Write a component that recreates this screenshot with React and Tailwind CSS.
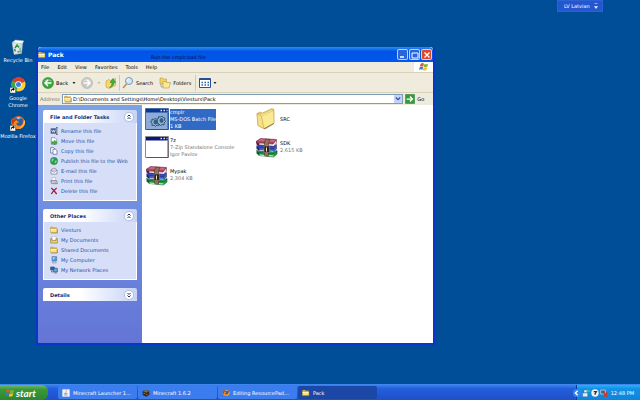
import React, { useState } from 'react';

function Svg({ size = 'size-3', box = 24, children }) {
  return (
    <svg className={`${size} shrink-0`} viewBox={`0 0 ${box} ${box}`} aria-hidden="true">
      {children}
    </svg>
  );
}

function FolderIcon({ size }) {
  return (
    <Svg size={size}>
      <path d="M1 5l2-2h6l2 2h9v4H1z" fill="#e3b548" stroke="#a8842c" />
      <path d="M1 8h20v12H1z" fill="#fbe27e" stroke="#a8842c" />
      <path d="M2 9h18v3H2z" fill="#fff6bd" />
      <path d="M22 9v12H3" fill="none" stroke="#6e5a2a" strokeWidth="1.5" />
    </Svg>
  );
}

function BigFolderIcon() {
  return (
    <Svg size="size-6" box={48}>
      <path d="M4 13l6-3 5 2 19-9 4 2v27L17 43 6 37z" fill="#eccb62" stroke="#b5933a" />
      <path d="M10 15l7-2 18-8 2 25-20 11z" fill="#fdf3a8" stroke="#d5b858" />
      <path d="M4 13l9 5 5 25-12-6z" fill="#f8e183" stroke="#c09c3c" />
      <path d="M13 18l24-11 1 25-20 11z" fill="#fbea94" stroke="#c9aa4a" />
      <path d="M18 43l20-11v2L19 45z" fill="#8a7a4a" />
    </Svg>
  );
}

function WinrarIcon() {
  return (
    <Svg size="size-6" box={48}>
      <path d="M2 13l9-6 32 2-7 9-28-3z" fill="#b8405f" stroke="#4a1428" />
      <path d="M11 8l29 2-3 4-30-2z" fill="#cf6480" />
      <path d="M2 13l6 3v6l-5-3z" fill="#6b1635" />
      <path d="M8 16l28 2 7-8v6l-6 7-29-2z" fill="#f0e4e8" stroke="#5c2038" />
      <path d="M3 22l6-2 28 3 6-4v3l-6 6-29-3z" fill="#2f48c8" stroke="#141c58" />
      <path d="M3 22l5 3v6l-5-3z" fill="#182778" />
      <path d="M8 25l29 3 6-5v5l-6 6-29-2z" fill="#4560d8" stroke="#141c58" />
      <path d="M9 30l28 2v2L9 32z" fill="#f0f2ff" />
      <path d="M3 31l6 1 28 2 7-3v3l-7 5-29-3z" fill="#2fae5a" stroke="#0a4020" />
      <path d="M3 31l5 4v6l-5-4z" fill="#11602c" />
      <path d="M8 35l29 2 7-4v5l-7 6-29-3z" fill="#1c9a44" stroke="#0a4020" />
      <path d="M9 39l28 2v2L9 41z" fill="#e2f6e4" />
      <path d="M21 8l9 1-3 8v25l-8-1V16z" fill="#93705a" stroke="#40281a" />
      <path d="M18 22h11v13H18z" fill="#2c2428" stroke="#a58e78" />
      <path d="M23 25v8" stroke="#f1e2b4" strokeWidth="2" />
    </Svg>
  );
}

function ConsoleIcon({ gear }) {
  return (
    <Svg size="size-6" box={48}>
      <path d="M1 3h46v42H1z" fill={gear ? '#8eaad8' : '#ffffff'} stroke={gear ? '#4a6ba8' : '#8b8b90'} strokeWidth="2" />
      <path d="M2 4h44v7H2z" fill={gear ? '#07388f' : '#0b1580'} />
      <path d="M31 7h3m3 0h3m3 0h2" stroke="#d6e2ff" strokeWidth="3" />
      <path d="M46 12v33H3" fill="none" stroke={gear ? '#2a4f8d' : '#55555c'} strokeWidth="2" />
      {gear && (
        <g fill="#8fb4cc" stroke="#2c587f" strokeWidth="2">
          <path d="M11 29l3-1v-4l4 1 3-3 3 3 4-1v4l3 2-3 3v4l-4-1-3 3-3-3-4 1v-4z" />
          <path d="M24 24l3-1v-4l4 1 3-2 2 3 4 1-1 4 2 3-3 3v4l-4-1-3 2-3-3-3-1v-4z" />
          <ellipse cx="21" cy="30" rx="3" ry="4" fill="#33608a" />
          <ellipse cx="33" cy="27" rx="3" ry="4" fill="#33608a" />
        </g>
      )}
    </Svg>
  );
}

function FirefoxIcon({ size }) {
  return (
    <Svg size={size} box={32}>
      <circle cx="17" cy="15" r="13" fill="#e8641b" />
      <circle cx="17" cy="13" r="9" fill="#2c5da8" />
      <path d="M12 6c3-3 9-3 12 1-3-1-5 0-6 2z" fill="#9cc8ee" />
      <path d="M4 6c-4 10 0 20 11 22 9 1 15-6 15-14-2 5-6 8-11 8-4 0-7-3-6-6 1 0 4 0 5-2-2-1-4-2-5-4-2-1-4-1-5 0-1-1-3-2-4-4z" fill="#f08a24" />
      <path d="M4 6c-2 6-1 12 3 15-1-5 1-8 6-11-2-1-4-1-5 0-1-1-3-2-4-4z" fill="#c03a12" />
      <path d="M30 10c1 9-4 16-12 17 5-3 9-8 9-14z" fill="#fbc63a" />
    </Svg>
  );
}

function ShortcutArrow() {
  return (
    <g>
      <path d="M0 21h11v11H0z" fill="#ffffff" stroke="#555555" />
      <path d="M3 30c0-3 1-4 3-4v2l4-4-4-3v2c-4 0-5 4-3 7z" fill="#111111" />
    </g>
  );
}

function RecycleIcon() {
  return (
    <Svg size="size-4" box={32}>
      <path d="M4 7l22-3-3 25-15 2z" fill="#dfe8ea" stroke="#93a7ae" />
      <path d="M4 7l7-5 17 2-4 5z" fill="#ffffff" stroke="#9fb2b8" />
      <path d="M10 18l4-6 4 5m2 1l1 7-6 1m-4-1l-2-5" fill="none" stroke="#2f9a3c" strokeWidth="3" />
      <path d="M24 8l-2 20-5 1 2-20z" fill="#b5c6cc" opacity=".6" />
    </Svg>
  );
}

function ChromeIcon() {
  return (
    <Svg size="size-4" box={32}>
      <circle cx="17" cy="15" r="14" fill="#fcd13a" />
      <path d="M17 15L4.500 8.500A14 14 0 0 1 30 9z" fill="#dc3c2c" />
      <path d="M17 15l-4 13.500A14 14 0 0 1 4.500 8.500z" fill="#3aa84a" />
      <circle cx="17" cy="15" r="6.500" fill="#ffffff" />
      <circle cx="17" cy="15" r="5" fill="#3d7fd8" />
      <ShortcutArrow />
    </Svg>
  );
}

function DesktopFirefox() {
  return (
    <span className="relative flex">
      <FirefoxIcon size="size-4" />
      <svg className="absolute inset-0 size-4" viewBox="0 0 32 32" aria-hidden="true"><ShortcutArrow /></svg>
    </span>
  );
}

function NavIcon({ forward }) {
  return (
    <Svg>
      <circle cx="12" cy="12" r="11" fill={forward ? '#c9c9c4' : '#3aa63a'} stroke={forward ? '#a9a9a4' : '#1f7a25'} />
      <path d="M4 9c2-6 13-7 16 0-5-2-11-2-16 0z" fill="#ffffff" opacity=".35" />
      <path d={forward ? 'M5 12h13m-6-6l6 6-6 6' : 'M19 12H6m6-6l-6 6 6 6'} fill="none" stroke="#ffffff" strokeWidth="3" />
    </Svg>
  );
}

function UpIcon() {
  return (
    <Svg>
      <path d="M2 8l6-3 3 2 10-4v14L8 23l-6-3z" fill="#f5d96b" stroke="#b08c32" />
      <path d="M9 21c4-2 5-6 5-10h-4l6-8 5 8h-3c0 4-3 9-9 10z" fill="#42b048" stroke="#1f7a25" />
    </Svg>
  );
}

function SearchIcon() {
  return (
    <Svg>
      <path d="M9 14l-7 8" stroke="#b88d55" strokeWidth="3" />
      <circle cx="14" cy="8" r="7" fill="#cfe9fa" stroke="#7895b0" strokeWidth="2" />
      <path d="M10 8c0-3 2-4 4-4" stroke="#ffffff" strokeWidth="2" fill="none" />
    </Svg>
  );
}

function FoldersIcon() {
  return (
    <Svg>
      <path d="M2 2h5l2 2h6v10H2z" fill="#f3d567" stroke="#a98733" />
      <path d="M8 9h5l2 2h8l-3 11H8z" fill="#fbe995" stroke="#a98733" />
      <path d="M4 14v6h4" fill="none" stroke="#777777" />
    </Svg>
  );
}

function ViewsIcon() {
  return (
    <Svg>
      <path d="M1 3h22v18H1z" fill="#ffffff" stroke="#2c4f93" strokeWidth="2" />
      <path d="M1 3h22v3H1z" fill="#2c4f93" />
      <path d="M5 11h3m3 0h3m3 0h3M5 16h3m3 0h3m3 0h3" stroke="#2b62a8" strokeWidth="3" />
    </Svg>
  );
}

function WindowsFlag({ size = 'size-3' }) {
  return (
    <Svg size={size}>
      <path d="M4 4c3-2 5-2 8 0l-2 7c-3-2-5-2-8 0z" fill="#e8552b" />
      <path d="M13 5c3 1 6 1 9-1l-2 7c-3 2-6 2-9 1z" fill="#78b83a" />
      <path d="M2 12c3-2 5-2 8 0l-2 7c-3-2-5-2-8 0z" fill="#3e77dc" />
      <path d="M11 13c3 1 6 1 9-1l-2 7c-3 2-6 2-9 1z" fill="#f6c32b" />
    </Svg>
  );
}

const page = <path d="M4 2h11l5 5v15H4z" fill="#ffffff" stroke="#6577a8" strokeWidth="2" />;

const glyphs = {
  rename: (
    <>
      <path d="M2 4h16v16H2z" fill="#3c5690" />
      <path d="M5 8l3 8 3-7 2 7 3-8" fill="none" stroke="#ffffff" strokeWidth="2" />
      <path d="M18 2h5m-2.500 0v20m-2.500 0h5" stroke="#1c2748" strokeWidth="2" />
    </>
  ),
  move: (
    <>
      {page}
      <path d="M5 14h8V9l9 8-9 7v-4H5z" fill="#46ad3c" stroke="#1d6b20" />
    </>
  ),
  copy: (
    <>
      <path d="M2 2h9l4 4v12H2z" fill="#ffffff" stroke="#4a5c96" strokeWidth="2" />
      <path d="M9 7h8l4 4v11H9z" fill="#ffffff" stroke="#4a5c96" strokeWidth="2" />
    </>
  ),
  publish: (
    <>
      <circle cx="12" cy="12" r="11" fill="#2aa048" stroke="#1a6b44" />
      <path d="M5 7c4-4 7-2 6 1s-5 3-3 7c-4-1-5-5-3-8zm10 4c4-2 6 0 5 3s-4 5-6 4z" fill="#7fd5a0" />
      <path d="M13 4c3 0 5 2 6 4l-5 1z" fill="#3a78c8" />
    </>
  ),
  email: (
    <>
      <path d="M3 9l9-6 9 6v12H3z" fill="#ffffff" stroke="#62709c" strokeWidth="2" />
      <path d="M3 10l9 6 9-6" fill="none" stroke="#62709c" strokeWidth="2" />
      <path d="M7 5h9v6H7z" fill="#f4dce0" stroke="#a06a78" />
    </>
  ),
  print: (
    <>
      <path d="M7 2h10l-2 9H5z" fill="#ffffff" stroke="#7c7c90" />
      <path d="M2 11h18l2 9H5z" fill="#cfd1dc" stroke="#67677c" strokeWidth="2" />
      <path d="M13 16h5" stroke="#d49a3c" strokeWidth="2" />
    </>
  ),
  remove: <path d="M4 3c6 5 11 11 16 18M20 3C13 8 8 14 4 21" fill="none" stroke="#9c1c3a" strokeWidth="4" />,
  documents: (
    <>
      <path d="M6 1h12v14H6z" fill="#ffffff" stroke="#7b7b7b" />
      <path d="M2 8h4v6h12V8h4v13H2z" fill="#f6dc77" stroke="#8d7434" strokeWidth="2" />
    </>
  ),
  computer: (
    <>
      <path d="M6 2h14v13H6z" fill="#48a0e4" stroke="#5b6f96" strokeWidth="2" />
      <path d="M8 4h8l-7 8z" fill="#a9dcff" />
      <path d="M10 16h7l2 5H6z" fill="#c9cede" stroke="#59617c" />
    </>
  ),
  network: (
    <>
      <path d="M2 3h11v9H2z" fill="#2769bb" stroke="#34466f" strokeWidth="2" />
      <path d="M11 7h11v11H11z" fill="#58aeea" stroke="#34466f" strokeWidth="2" />
      <path d="M5 14v4h5m4 3h6" fill="none" stroke="#34466f" strokeWidth="2" />
    </>
  ),
};

const tasks = [
  ['rename', 'Rename this file'],
  ['move', 'Move this file'],
  ['copy', 'Copy this file'],
  ['publish', 'Publish this file to the Web'],
  ['email', 'E-mail this file'],
  ['print', 'Print this file'],
  ['remove', 'Delete this file'],
];

const places = [
  ['folder', 'Viesturs'],
  ['documents', 'My Documents'],
  ['folder', 'Shared Documents'],
  ['computer', 'My Computer'],
  ['network', 'My Network Places'],
];

const files = [
  { name: 'cmplr', lines: ['MS-DOS Batch File', '1 KB'], icon: <ConsoleIcon gear /> },
  { name: 'SRC', lines: [], icon: <BigFolderIcon /> },
  { name: '7z', lines: ['7-Zip Standalone Console', 'Igor Pavlov'], icon: <ConsoleIcon /> },
  { name: 'SDK', lines: ['2,615 KB'], icon: <WinrarIcon /> },
  { name: 'Mypak', lines: ['2,304 KB'], icon: <WinrarIcon /> },
];

function Panel({ title, items, closed }) {
  return (
    <section>
      <h2 className="flex h-[13px] items-center justify-between rounded-t-xs bg-linear-to-r from-white from-40% to-[#c6d3f7] pl-[7px] pr-1 font-bold text-[#1b2f70]">
        {title}
        <button type="button" aria-label={`Toggle ${title}`} className="flex size-2 items-center justify-center rounded-full bg-white ring-1 ring-[#b4c0e4]">
          <svg className="size-2" viewBox="0 0 16 16" aria-hidden="true">
            <path d={closed ? 'M5 4l3 3 3-3M5 9l3 3 3-3' : 'M5 7l3-3 3 3M5 12l3-3 3 3'} fill="none" stroke="#1d2f68" strokeWidth="2" />
          </svg>
        </button>
      </h2>
      {items && (
        <ul className="border border-t-0 border-white bg-[#d6dff7] pb-1 pl-1.5 pt-[3px]">
          {items.map(([icon, label]) => (
            <li key={label} className="h-2.5">
              <a href="#" className="flex h-full items-center gap-[3px] text-[#2450a8]">
                {icon === 'folder' ? <FolderIcon size="size-2" /> : <Svg size="size-2">{glyphs[icon]}</Svg>}
                {label}
              </a>
            </li>
          ))}
        </ul>
      )}
    </section>
  );
}

function Caret({ muted }) {
  return (
    <svg className="h-1 w-1 shrink-0" viewBox="0 0 8 8" aria-hidden="true">
      <path d="M1 2h6L4 6z" fill={muted ? '#b9b6a5' : '#222222'} />
    </svg>
  );
}

function TitleBar() {
  const btn = 'flex size-[11px] items-center justify-center rounded-xs border border-white/70';
  return (
    <header className="relative flex h-[15px] shrink-0 items-center gap-0.5 rounded-t-sm bg-linear-to-b from-[#2f8bf5] via-[#0054e3] via-30% to-[#0058ee] text-white">
      <FolderIcon size="size-2" />
      <h1 className="flex-1 text-[6px] font-bold">Pack</h1>
      <div className="flex gap-px pr-px">
        <button type="button" aria-label="Minimize" className={`${btn} bg-[#2a63dc]`}>
          <svg className="size-2" viewBox="0 0 8 8" aria-hidden="true"><path d="M1 6h4" stroke="#ffffff" strokeWidth="1.500" /></svg>
        </button>
        <button type="button" aria-label="Maximize" className={`${btn} bg-[#2a63dc]`}>
          <svg className="size-2" viewBox="0 0 8 8" aria-hidden="true"><path d="M1 2h6v5H1z" fill="none" stroke="#ffffff" /></svg>
        </button>
        <button type="button" aria-label="Close" className={`${btn} bg-[#d9492a]`}>
          <svg className="size-2" viewBox="0 0 8 8" aria-hidden="true"><path d="M1.500 1.500l5 5m0-5l-5 5" stroke="#ffffff" strokeWidth="1.300" /></svg>
        </button>
      </div>
      <span className="absolute left-[113px] top-[6px] text-[#031048]">Run the cmplr.bad file</span>
    </header>
  );
}

function Toolbar() {
  return (
    <div className="flex h-5 shrink-0 items-center border-b border-[#d8d2bd] pl-1">
      <button type="button" className="flex w-[30px] items-center gap-0.5"><NavIcon />Back</button>
      <button type="button" aria-label="Back history" className="flex w-[9px]"><Caret /></button>
      <button type="button" aria-label="Forward" className="flex w-4"><NavIcon forward /></button>
      <button type="button" aria-label="Forward history" className="flex w-2"><Caret muted /></button>
      <button type="button" aria-label="Up" className="mr-0.5 flex w-3"><UpIcon /></button>
      <div className="flex h-4 items-center gap-1.5 border-x border-[#cfcab6] pl-0.5 pr-1">
        <button type="button" className="flex items-center gap-0.5"><SearchIcon />Search</button>
        <button type="button" className="flex items-center gap-0.5"><FoldersIcon />Folders</button>
      </div>
      <button type="button" aria-label="Views" className="ml-[3px] flex items-center gap-0.5"><ViewsIcon /><Caret /></button>
    </div>
  );
}

function AddressBar() {
  const [path, setPath] = useState('D:\\Documents and Settings\\Home\\Desktop\\Viesturs\\Pack');
  return (
    <form className="flex h-3 shrink-0 items-center gap-0.5 pl-0.5" onSubmit={e => e.preventDefault()}>
      <label htmlFor="address" className="w-5 text-[#77766c]">Address</label>
      <div className="flex h-2.5 min-w-0 flex-1 items-center gap-px border border-[#7f9db9] bg-white pl-px">
        <FolderIcon size="size-2" />
        <input id="address" className="min-w-0 flex-1 outline-none" value={path} onChange={e => setPath(e.target.value)} />
        <button type="button" aria-label="Show addresses" className="flex h-2 w-2 items-center justify-center bg-[#c3d3fb]">
          <svg className="size-1.5" viewBox="0 0 8 8" aria-hidden="true"><path d="M1 2l3 3 3-3" fill="none" stroke="#34518f" strokeWidth="1.500" /></svg>
        </button>
      </div>
      <button type="submit" className="flex w-7 items-center gap-0.5">
        <Svg size="size-2.5">
          <path d="M1 1h22v22H1z" fill="#34993c" stroke="#1f6e28" />
          <path d="M4 12h14m-6-6l6 6-6 6" fill="none" stroke="#ffffff" strokeWidth="3" />
        </Svg>
        Go
      </button>
    </form>
  );
}

function Explorer() {
  const [selected, setSelected] = useState('cmplr');
  return (
    <main className="mb-[39px] mt-[47px] flex w-[62.4%] flex-col rounded-t-sm border-b-2 border-x-2 border-[#0a36c6] bg-[#efecde]">
      <TitleBar />
      <nav className="flex h-[11px] shrink-0 items-stretch border-b border-[#d8d2bd]">
        <div className="flex flex-1 items-center gap-2 pl-[3px]">
          {['File', 'Edit', 'View', 'Favorites', 'Tools', 'Help'].map(m => <button key={m} type="button">{m}</button>)}
        </div>
        <span className="flex w-[19px] items-center justify-center bg-white"><WindowsFlag size="size-2.5" /></span>
      </nav>
      <Toolbar />
      <AddressBar />
      <div className="flex flex-1 bg-white">
        <aside className="flex w-[104px] shrink-0 flex-col gap-2 bg-linear-to-b from-[#7ba2e7] to-[#6375d6] px-[5px] pt-[5px]">
          <Panel title="File and Folder Tasks" items={tasks} />
          <Panel title="Other Places" items={places} />
          <Panel title="Details" closed />
        </aside>
        <ul className="grid grid-cols-[110px_110px] content-start gap-y-1 pl-[3px] pt-0.5">
          {files.map(f => (
            <li key={f.name}>
              <button type="button" onClick={() => setSelected(f.name)} className="flex h-6 items-center gap-px text-left leading-[7px]">
                {f.icon}
                <span className={selected === f.name ? 'bg-[#316ac5] text-white' : 'text-[#757575]'}>
                  <span className={selected === f.name ? 'block' : 'block text-black'}>{f.name}</span>
                  {f.lines.map(l => <span key={l} className="block whitespace-nowrap">{l}</span>)}
                </span>
              </button>
            </li>
          ))}
        </ul>
      </div>
    </main>
  );
}

function Taskbar() {
  const apps = [
    {
      label: 'Minecraft Launcher 1...',
      icon: (
        <Svg size="size-2">
          <path d="M1 1h22v22H1z" fill="#f5f5f5" />
          <path d="M12 3c4 4-4 5 0 9" fill="none" stroke="#df6a28" strokeWidth="2" />
          <path d="M6 14h11m-10 4h9" stroke="#4b74a8" strokeWidth="2" />
        </Svg>
      ),
    },
    {
      label: 'Minecraft 1.6.2',
      icon: (
        <Svg size="size-2">
          <path d="M2 6l10-4 10 4v12l-10 5-10-5z" fill="#3c2b22" />
          <path d="M2 6l10-4 10 4-10 5z" fill="#66734b" />
          <path d="M5 12h3v3H5zm8 3h3v3h-3z" fill="#a98768" />
        </Svg>
      ),
    },
    { label: 'Editing ResourcePad...', icon: <FirefoxIcon size="size-2" /> },
    { label: 'Pack', icon: <FolderIcon size="size-2" />, active: true },
  ];
  return (
    <footer className="flex h-4 items-stretch border-t border-[#3f86ee] bg-linear-to-b from-[#3c80f0] via-[#245edb] via-25% to-[#1f50c8] text-white">
      <button type="button" className="flex w-12 items-center gap-px rounded-r-md bg-linear-to-b from-[#6cb964] via-[#3a9a3a] via-30% to-[#2c8530] pl-[5px] font-[Lato,sans-serif] text-[10px] font-bold italic">
        <WindowsFlag size="size-2.5" />start
      </button>
      <div className="ml-2.5 flex flex-1 gap-px py-px">
        {apps.map(a => (
          <button
            key={a.label}
            type="button"
            className={`flex w-[79px] items-center gap-[3px] whitespace-nowrap rounded-xs pl-1 ${a.active ? 'bg-[#1b47a6]' : 'bg-[#3b7cee]'}`}
          >
            {a.icon}{a.label}
          </button>
        ))}
      </div>
      <div className="flex w-16 items-center gap-px border-l border-[#0b3f9a] bg-linear-to-b from-[#27b4f5] via-[#1290e8] via-25% to-[#0f83dc]">
        <button type="button" aria-label="Show hidden icons" className="-ml-1 flex rounded-full bg-[#2f86ec]">
          <Svg size="size-2"><path d="M14 5l-7 7 7 7" fill="none" stroke="#ffffff" strokeWidth="4" /></Svg>
        </button>
        <Svg size="size-2">
          <path d="M2 12h15v11H2zM6 3h9v8H6z" fill="#e5edf5" stroke="#39557e" />
          <path d="M16 10V2l6 7V2" fill="none" stroke="#3fd04b" strokeWidth="3" />
        </Svg>
        <Svg size="size-2">
          <circle cx="12" cy="12" r="11" fill="#f0f0f0" />
          <path d="M8 8h8l-5 9" fill="none" stroke="#333333" strokeWidth="4" />
        </Svg>
        <Svg size="size-2">
          <path d="M2 3h14v12H2z" fill="#4a5e80" stroke="#dbe6f2" strokeWidth="2" />
          <path d="M11 11l11 11m0-11L11 22" stroke="#e23222" strokeWidth="5" />
        </Svg>
        <time className="ml-auto whitespace-nowrap pr-1.5">12:48 PM</time>
      </div>
    </footer>
  );
}

function Shortcut({ icon, children, className }) {
  return (
    <a href="#" className={`flex flex-col items-center gap-0.5 text-center leading-[7px] text-white ${className}`}>
      {icon}
      <span>{children}</span>
    </a>
  );
}

export default function App() {
  return (
    <div className="relative flex min-h-screen flex-col overflow-hidden bg-[#004e98] font-['DejaVu_Sans',sans-serif] text-[5px] leading-[8px] text-black">
      <div className="flex flex-1">
        <div className="flex w-9 shrink-0 flex-col pt-[39px]">
          <Shortcut icon={<RecycleIcon />} className="whitespace-nowrap">Recycle Bin</Shortcut>
          <Shortcut icon={<ChromeIcon />} className="mt-[13px]">Google<br />Chrome</Shortcut>
          <Shortcut icon={<DesktopFirefox />} className="mt-1.5 whitespace-nowrap">Mozilla Firefox</Shortcut>
        </div>
        <Explorer />
      </div>
      <Taskbar />
      <div className="absolute right-[37px] top-0 flex h-3 w-[46px] items-center justify-between border border-[#2c62d6] bg-[#2456cf] pl-1.5 pr-1 text-white">
        <button type="button">LV Latvian</button>
        <button type="button" aria-label="Language bar options">
          <svg className="h-2 w-1" viewBox="0 0 8 16" aria-hidden="true"><path d="M1 3h6M1 9h6l-3 4z" stroke="#ffffff" fill="#ffffff" /></svg>
        </button>
      </div>
    </div>
  );
}
